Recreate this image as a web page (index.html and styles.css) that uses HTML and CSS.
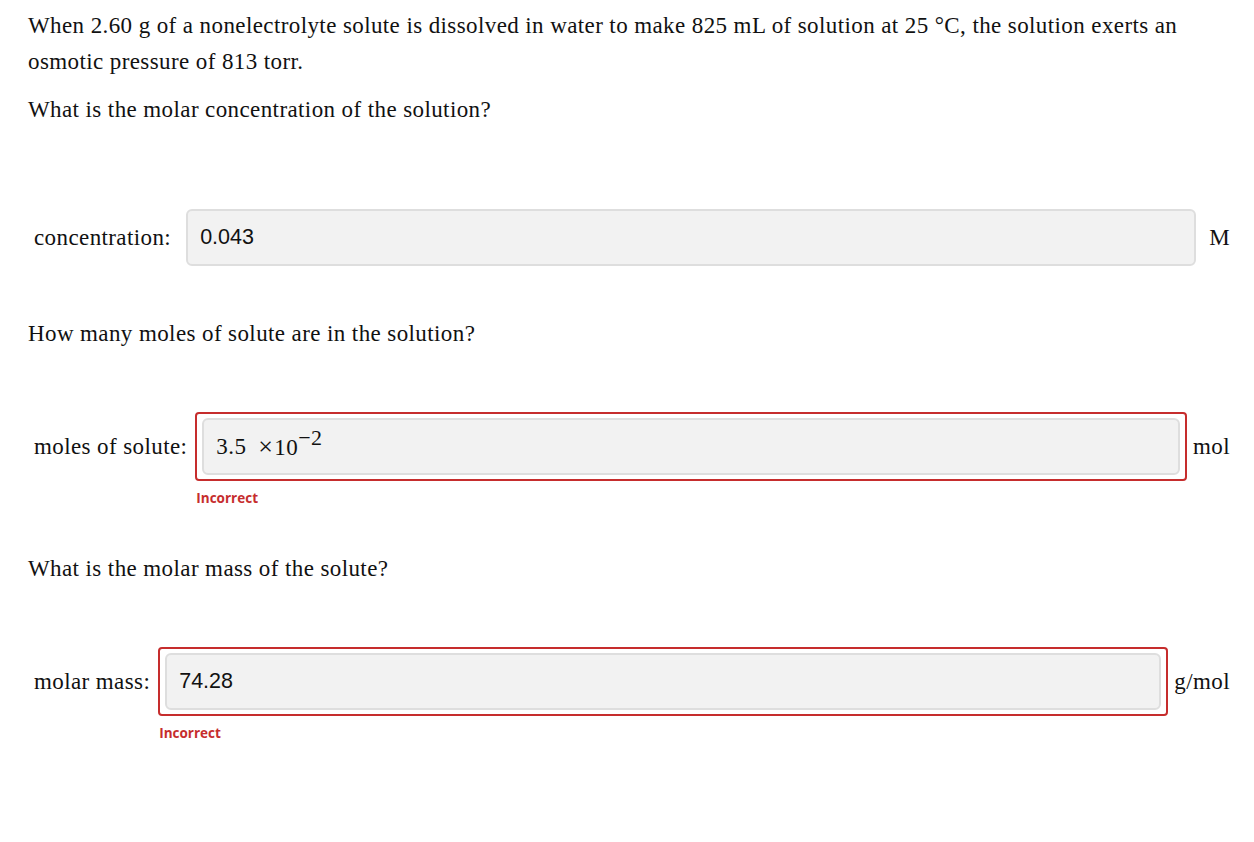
FILE: index.html
```html
<!DOCTYPE html>
<html>
<head>
<meta charset="utf-8">
<link rel="stylesheet" href="styles.css">
</head>
<body>
<div class="page">
  <p class="text first">When 2.60 g of a nonelectrolyte solute is dissolved in water to make 825 mL of solution at 25 °C, the solution exerts an osmotic pressure of 813 torr.</p>
  <p class="text">What is the molar concentration of the solution?</p>

  <div class="answer a1">
    <span class="label">concentration:</span>
    <div class="field">
      <div class="input sans">0.043</div>
    </div>
    <span class="unit">M</span>
  </div>

  <p class="text q">How many moles of solute are in the solution?</p>

  <div class="answer a2">
    <span class="label">moles of solute:</span>
    <div class="field wrong">
      <div class="input serif">3.5 <span class="times"><span class="x">×</span>10<sup>−2</sup></span></div>
    </div>
    <span class="unit">mol</span>
    <div class="feedback fb2">Incorrect</div>
  </div>

  <p class="text q">What is the molar mass of the solute?</p>

  <div class="answer a3">
    <span class="label">molar mass:</span>
    <div class="field wrong">
      <div class="input sans">74.28</div>
    </div>
    <span class="unit">g/mol</span>
    <div class="feedback fb3">Incorrect</div>
  </div>
</div>
</body>
</html>
```

FILE: styles.css
```css
html, body {
  margin: 0;
  padding: 0;
  background: #ffffff;
}

body {
  font-family: "Liberation Serif", "Times New Roman", serif;
  color: #111111;
}

.page {
  padding: 8px 24px 0 28px;
}

.text {
  margin: 0;
  font-size: 23px;
  letter-spacing: 0.4px;
  line-height: 36px;
}

.text + .text {
  margin-top: 12px;
}

.answer {
  display: grid;
  grid-template-columns: auto 1fr auto;
  align-items: center;
  padding-left: 6px;
}

.a1 {
  margin-top: 75px;
  margin-bottom: 44px;
}

.a2 {
  margin-top: 60px;
  margin-bottom: 43px;
}

.a3 {
  margin-top: 60px;
}

.label {
  font-size: 23px;
  letter-spacing: 0.4px;
  margin-right: 8px;
  white-space: nowrap;
}

.field {
  border: 2px solid transparent;
  border-radius: 4px;
  padding: 4px 5px;
}

.field.wrong {
  border-color: #c62d2d;
}

.input {
  box-sizing: border-box;
  height: 57px;
  background: #f2f2f2;
  border: 2px solid #dedede;
  border-radius: 6px;
  padding: 0 12px;
  display: flex;
  align-items: center;
  color: #111111;
}

.input.sans {
  font-family: "Liberation Sans", Arial, sans-serif;
  font-size: 21.5px;
}

.input.serif {
  font-family: "Liberation Serif", "Times New Roman", serif;
  font-size: 23px;
  letter-spacing: 0.4px;
}

.times {
  margin-left: 12px;
}

.times .x {
  font-size: 26px;
  margin-right: 1px;
}

.times sup {
  font-size: 22px;
  vertical-align: 0;
  position: relative;
  top: -10px;
}

.unit {
  font-size: 23px;
  letter-spacing: 0.4px;
  margin-left: 6px;
  white-space: nowrap;
}

.feedback {
  grid-column: 2;
  margin-left: 1px;
  font-family: "Open Sans", "Noto Sans", sans-serif;
  font-weight: 700;
  font-size: 13.5px;
  line-height: 20px;
  color: #c62d2d;
}

.fb2 {
  margin-top: 7px;
}

.fb3 {
  margin-top: 7px;
}
```
